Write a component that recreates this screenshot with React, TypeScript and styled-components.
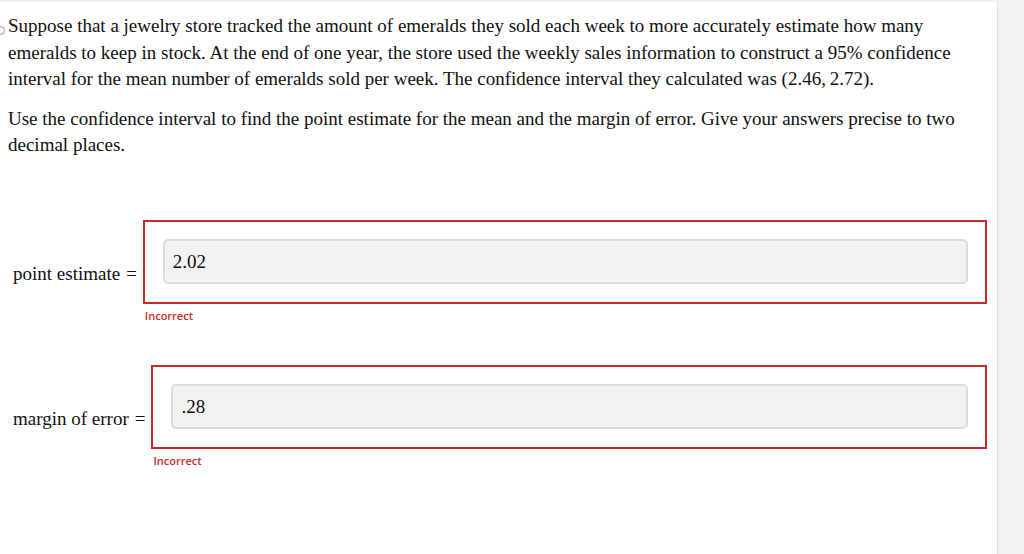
import styled, { createGlobalStyle } from 'styled-components';

const GlobalStyle = createGlobalStyle`
  html, body {
    margin: 0;
    padding: 0;
    background: #f2f2f2;
  }
`;

const Page = styled.div`
  display: flex;
  width: 1024px;
  height: 554px;
  padding-top: 2px;
  box-sizing: border-box;
  background: #f2f2f2;
  overflow: hidden;
`;

const Panel = styled.div`
  position: relative;
  width: 998px;
  background: #fff;
  border-right: 1px solid #e0e0e0;
  padding: 11px 10px 0 8px;
  box-sizing: border-box;
  font-family: "Liberation Serif", "Times New Roman", serif;
  font-size: 19px;
  color: #111;
`;

const Marker = styled.span`
  position: absolute;
  left: -4px;
  top: 24px;
  width: 7px;
  height: 7px;
  border: 1px solid #999;
  border-radius: 50%;
`;

const Para = styled.p`
  margin: 0 0 13px;
  max-width: 960px;
  line-height: 26.5px;
`;

const Question = styled.div<{ $top: number }>`
  display: flex;
  align-items: flex-start;
  gap: 4px;
  padding-left: 5px;
  margin-top: ${(p) => p.$top}px;
`;

const Label = styled.span`
  margin-top: 43px;
  white-space: nowrap;
  line-height: 1.15;
`;

const Equals = styled.span`
  margin: 0 2px 0 6px;
`;

const Field = styled.div`
  flex: 1;
  display: flex;
  flex-direction: column;
`;

const AnswerBox = styled.div`
  border: 2px solid #c8292c;
  padding: 17px 17px 18px 18px;
`;

const Input = styled.div`
  height: 45px;
  box-sizing: border-box;
  background: #f2f2f2;
  border: 2px solid #dcdcdc;
  border-radius: 5px;
  padding: 0 8px;
  display: flex;
  align-items: center;
  line-height: 1;
`;

const Feedback = styled.div`
  margin: 4px 0 0 2px;
  font-family: "Open Sans", "Liberation Sans", sans-serif;
  font-size: 11px;
  font-weight: 600;
  color: #c8292c;
`;

const answers = [
  { label: 'point estimate', value: '2.02', top: 61 },
  { label: 'margin of error', value: '.28', top: 42 },
];

const App = (): JSX.Element => {
  return (
    <Page>
      <GlobalStyle />
      <Panel>
        <Marker />
        <Para>
          Suppose that a jewelry store tracked the amount of emeralds they sold each week to more accurately estimate how many
          emeralds to keep in stock. At the end of one year, the store used the weekly sales information to construct a 95% confidence
          interval for the mean number of emeralds sold per week. The confidence interval they calculated was (2.46,&thinsp;2.72).
        </Para>
        <Para>
          Use the confidence interval to find the point estimate for the mean and the margin of error. Give your answers precise to two
          decimal places.
        </Para>
        {answers.map((a) => (
          <Question key={a.label} $top={a.top}>
            <Label>
              {a.label}
              <Equals>=</Equals>
            </Label>
            <Field>
              <AnswerBox>
                <Input>{a.value}</Input>
              </AnswerBox>
              <Feedback>Incorrect</Feedback>
            </Field>
          </Question>
        ))}
      </Panel>
    </Page>
  );
};

export default App;
